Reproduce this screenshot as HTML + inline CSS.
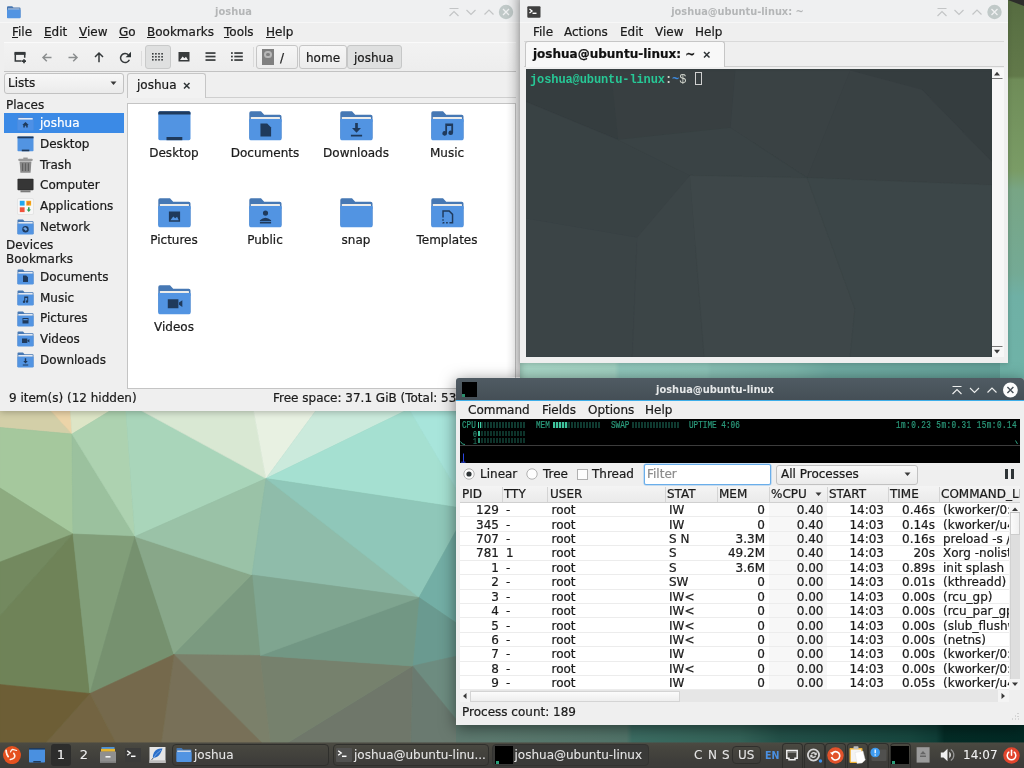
<!DOCTYPE html>
<html lang="en">
<head>
<meta charset="utf-8">
<title>Desktop</title>
<style>
*{box-sizing:border-box;margin:0;padding:0}
html,body{width:1024px;height:768px;overflow:hidden;background:#7fa590}
body{position:relative;font-family:"DejaVu Sans","Liberation Sans",sans-serif;font-size:12px;color:#1b1b1b;line-height:14px}
.abs{position:absolute}
.t{position:absolute;white-space:nowrap;line-height:14px;-webkit-text-stroke:0.22px currentColor}
#panel .t{-webkit-text-stroke:0.080px currentColor}
u{text-decoration:underline;text-underline-offset:1px}
#wall{position:absolute;left:0;top:0;width:1024px;height:768px}
.win{position:absolute;background:#efefef}
.tb{position:absolute;left:0;top:0;right:0}
.ttl{position:absolute;font-weight:bold;font-size:12px;white-space:nowrap;line-height:14px}
</style>
</head>
<body>
<div id="root" style="position:absolute;left:0;top:0;width:1024px;height:768px;will-change:transform">
<!-- WALLPAPER -->
<svg id="wall" viewBox="0 0 1024 768" shape-rendering="geometricPrecision">
<rect width="1024" height="768" fill="#7fa590"/>
<!--WALLPOLYS-->
<polygon fill="#d3cfa8" stroke="#d3cfa8" stroke-width="0.6" points="0,400 45.6,405 72,434 0,427.5"/>
<polygon fill="#ecd4a8" stroke="#ecd4a8" stroke-width="0.6" points="45.6,405 70,405 72,434"/>
<polygon fill="#dde5c6" stroke="#dde5c6" stroke-width="0.6" points="70,405 119.5,405 72,434"/>
<polygon fill="#a5c89d" stroke="#a5c89d" stroke-width="0.6" points="0,427.5 72,434 73,534 0,488"/>
<polygon fill="#9bc19e" stroke="#9bc19e" stroke-width="0.6" points="72,434 73,534 135,536.5"/>
<polygon fill="#add2b0" stroke="#add2b0" stroke-width="0.6" points="72,434 135,536.5 125.5,405 119.5,405"/>
<polygon fill="#a9d5ba" stroke="#a9d5ba" stroke-width="0.6" points="135,536.5 266,478.5 131,405 125.5,405"/>
<polygon fill="#d9e8d3" stroke="#d9e8d3" stroke-width="0.6" points="266,478.5 131,405 252.7,405"/>
<polygon fill="#e8f1e2" stroke="#e8f1e2" stroke-width="0.6" points="266,478.5 252.7,405 320,405"/>
<polygon fill="#cbeadc" stroke="#cbeadc" stroke-width="0.6" points="266,478.5 320,405 409,405 409,409"/>
<polygon fill="#a5e0d1" stroke="#a5e0d1" stroke-width="0.6" points="266,478.5 409,409 468,509"/>
<polygon fill="#a8e5db" stroke="#a8e5db" stroke-width="0.6" points="409,409 409,405 530,405 530,509 468,509"/>
<polygon fill="#8dab80" stroke="#8dab80" stroke-width="0.6" points="0,488 73,534 0,562"/>
<polygon fill="#73895f" stroke="#73895f" stroke-width="0.6" points="0,562 73,534 0,616"/>
<polygon fill="#6f8358" stroke="#6f8358" stroke-width="0.6" points="73,534 0,616 0,684.5 90,693.5"/>
<polygon fill="#819e79" stroke="#819e79" stroke-width="0.6" points="73,534 90,693.5 135,536.5"/>
<polygon fill="#76916f" stroke="#76916f" stroke-width="0.6" points="135,536.5 90,693.5 174,654.5"/>
<polygon fill="#88a789" stroke="#88a789" stroke-width="0.6" points="135,536.5 174,654.5 252,575"/>
<polygon fill="#9ac2a7" stroke="#9ac2a7" stroke-width="0.6" points="135,536.5 266,478.5 252,575"/>
<polygon fill="#8fbcaa" stroke="#8fbcaa" stroke-width="0.6" points="266,478.5 252,575 419,597.5"/>
<polygon fill="#8fc7b9" stroke="#8fc7b9" stroke-width="0.6" points="266,478.5 468,509 419,597.5"/>
<polygon fill="#73aea5" stroke="#73aea5" stroke-width="0.6" points="419,597.5 468,509 530,509 530,660 493,648"/>
<polygon fill="#6a9a90" stroke="#6a9a90" stroke-width="0.6" points="419,597.5 412.5,666 493,648"/>
<polygon fill="#6d8c80" stroke="#6d8c80" stroke-width="0.6" points="412.5,666 493,648 530,660 530,768 496,768"/>
<polygon fill="#6a7a70" stroke="#6a7a70" stroke-width="0.6" points="412.5,666 496,768 410,768"/>
<polygon fill="#6f776a" stroke="#6f776a" stroke-width="0.6" points="412.5,666 410,768 283.9,745"/>
<polygon fill="#76816d" stroke="#76816d" stroke-width="0.6" points="260,655.5 412.5,666 283.9,745 270.6,745"/>
<polygon fill="#729784" stroke="#729784" stroke-width="0.6" points="260,655.5 419,597.5 412.5,666"/>
<polygon fill="#7fa590" stroke="#7fa590" stroke-width="0.6" points="252,575 260,655.5 419,597.5"/>
<polygon fill="#7b9a80" stroke="#7b9a80" stroke-width="0.6" points="252,575 174,654.5 260,655.5"/>
<polygon fill="#7b806a" stroke="#7b806a" stroke-width="0.6" points="174,654.5 260,655.5 270.6,745 264,745"/>
<polygon fill="#787058" stroke="#787058" stroke-width="0.6" points="174,654.5 264,745 161,745"/>
<polygon fill="#75694c" stroke="#75694c" stroke-width="0.6" points="90,693.5 174,654.5 161,745 117,745"/>
<polygon fill="#736442" stroke="#736442" stroke-width="0.6" points="90,693.5 117,745 44,745"/>
<polygon fill="#6d5e36" stroke="#6d5e36" stroke-width="0.6" points="0,684.5 90,693.5 44,745 0,745"/>
<defs>
<linearGradient id="gR" x1="0" y1="0" x2="0" y2="1"><stop offset="0" stop-color="#566b40"/><stop offset="0.07" stop-color="#5a7144"/><stop offset="0.2" stop-color="#62794a"/><stop offset="0.21" stop-color="#6f8c58"/><stop offset="0.45" stop-color="#7a9c66"/><stop offset="0.5" stop-color="#78a585"/><stop offset="0.72" stop-color="#74aa95"/><stop offset="0.78" stop-color="#6fb0a5"/><stop offset="1" stop-color="#6fb3a8"/></linearGradient>
<linearGradient id="gC" x1="0" y1="0" x2="1" y2="0"><stop offset="0" stop-color="#a8d6c6"/><stop offset="0.2" stop-color="#a0d0c0"/><stop offset="0.21" stop-color="#8fc6ba"/><stop offset="0.38" stop-color="#8cc3b7"/><stop offset="0.39" stop-color="#86bdb2"/><stop offset="0.55" stop-color="#7bb5aa"/><stop offset="0.62" stop-color="#6eaaa1"/><stop offset="1" stop-color="#62a098"/></linearGradient>
<linearGradient id="gE" x1="0" y1="0" x2="1" y2="0"><stop offset="0" stop-color="#5f7a70"/><stop offset="0.06" stop-color="#5d7b70"/><stop offset="0.3" stop-color="#52756a"/><stop offset="0.31" stop-color="#3d6e64"/><stop offset="0.5" stop-color="#346459"/><stop offset="0.57" stop-color="#24524a"/><stop offset="0.8" stop-color="#174840"/><stop offset="0.845" stop-color="#104039"/><stop offset="0.86" stop-color="#042d27"/><stop offset="1" stop-color="#022a25"/></linearGradient>
</defs>
<rect x="512" y="0" width="512" height="380" fill="url(#gC)"/>
<rect x="1000" y="0" width="24" height="380" fill="url(#gR)"/>
<polygon points="1008,0 1024,0 1024,6" fill="#2d2d2a"/>
<rect x="456" y="700" width="568" height="50" fill="url(#gE)"/>
<!--/WALLPOLYS-->
</svg>

<!--FM-->
<div class="win" id="fm" style="left:0;top:0;width:520px;height:411px;box-shadow:0 1px 7px rgba(0,0,0,.28)">
 <div class="abs" style="left:0;top:0;width:520px;height:22px;background:#eff0f1"></div>
 <svg class="abs" style="left:7px;top:5px" width="14" height="14" viewBox="0 0 14 14"><path d="M0,2.2 a1,1 0 0 1 1,-1 h4.2 l1.3,1.4 h6 a1,1 0 0 1 1,1 v9 h-13.5z" fill="#4877b1"/><rect x="1" y="3.6" width="11.5" height="1" fill="#e8eef5"/><rect x="0" y="4.6" width="13.5" height="8.6" rx="0.8" fill="#5294e2"/></svg>
 <div class="ttl" style="left:23px;width:421px;text-align:center;top:5px;font-size:9.900px;color:#b4b6b7">joshua</div>
 <svg class="abs" style="left:446px;top:4px" width="70" height="16" viewBox="0 0 70 16" fill="none" stroke="#c3c5c6" stroke-width="1.2">
  <path d="M3.5,4.5h9M3.5,12l4.5,-4.5l4.5,4.5"/><path d="M20.5,6l4.5,4.5l4.5,-4.5"/><path d="M38.500,10.500l4.500,-4.500l4.500,4.500"/>
  <circle cx="60" cy="8" r="7.200" fill="#c0c9c8" stroke="none"/><path d="M57,5l6,6M63,5l-6,6" stroke="#eff0f1" stroke-width="1.300"/>
 </svg>
 <div class="abs" style="left:0;top:22px;width:520px;height:1px;background:#f7f7f7"></div>
 <!-- menubar -->
 <div class="t" style="left:12px;top:25px"><u>F</u>ile</div>
 <div class="t" style="left:44px;top:25px"><u>E</u>dit</div>
 <div class="t" style="left:79px;top:25px"><u>V</u>iew</div>
 <div class="t" style="left:119px;top:25px"><u>G</u>o</div>
 <div class="t" style="left:147px;top:25px"><u>B</u>ookmarks</div>
 <div class="t" style="left:224px;top:25px"><u>T</u>ools</div>
 <div class="t" style="left:266px;top:25px"><u>H</u>elp</div>
 <!-- toolbar -->
 <div class="abs" style="left:4px;top:42px;width:512px;height:1px;background:#fafafa"></div>
 <div class="abs" style="left:4px;top:43px;width:512px;height:28px;background:linear-gradient(#f2f2f2,#ededed)"></div>
 <div class="abs" style="left:4px;top:71px;width:512px;height:1px;background:#c2c2c2"></div>
 <svg class="abs" style="left:12px;top:48.500px" width="240" height="18" viewBox="0 0 240 18" fill="none" stroke="#34383a" stroke-width="1.500">
  <!-- new tab -->
  <path d="M3.300,3.500v8.600h6.400M12.700,3.500v5.300"/><path d="M2.550,4.400h10.900" stroke-width="3"/><path d="M12,10.200v4M10,12.200h4" stroke-width="1.700"/>
  <!-- back / fwd (disabled) -->
  <g stroke="#8b8e8f"><path d="M31,8.500h8.500M34.800,4.700l-3.800,3.800l3.800,3.800"/><path d="M56.500,8.500h8.500M61.200,4.700l3.800,3.800l-3.800,3.800"/></g>
  <!-- up -->
  <path d="M87,13.200v-9M83,8l4,-4l4,4"/>
  <!-- reload -->
  <path d="M116.400,5.700A4.600,4.600 0 1 0 117.400,10.800"/><path d="M119,2.800v5.400h-5.400z" fill="#2e3436" stroke="none"/>
  <!-- sep -->
  <path d="M129.500,2v15" stroke="#dcdcdc" stroke-width="1"/>
 </svg>
 <div class="abs" style="left:145px;top:45px;width:26px;height:24px;background:#dfe0e0;border:1px solid #c9caca;border-radius:3px"></div>
 <svg class="abs" style="left:145px;top:45px" width="110" height="24" viewBox="0 0 110 24" fill="#383b3c">
  <g><rect x="7.0" y="8.0" width="1.600" height="1.600"/><rect x="10.1" y="8.0" width="1.600" height="1.600"/><rect x="13.2" y="8.0" width="1.600" height="1.600"/><rect x="16.3" y="8.0" width="1.600" height="1.600"/><rect x="7.0" y="11.0" width="1.600" height="1.600"/><rect x="10.1" y="11.0" width="1.600" height="1.600"/><rect x="13.2" y="11.0" width="1.600" height="1.600"/><rect x="16.3" y="11.0" width="1.600" height="1.600"/><rect x="7.0" y="14.0" width="1.600" height="1.600"/><rect x="10.1" y="14.0" width="1.600" height="1.600"/><rect x="13.2" y="14.0" width="1.600" height="1.600"/><rect x="16.3" y="14.0" width="1.600" height="1.600"/></g>
  <path d="M33.500,7h11v9.500h-11z M35,15l2.600,-3.600l1.800,1.800l1.600,-1.400l2,3.200z" fill-rule="evenodd"/>
  <rect x="60.500" y="7.200" width="10" height="1.700"/><rect x="60.500" y="10.700" width="10" height="1.700"/><rect x="60.500" y="14.200" width="10" height="1.700"/>
  <rect x="86" y="7.200" width="1.800" height="1.700"/><rect x="89.300" y="7.200" width="8.500" height="1.700"/><rect x="86" y="10.700" width="1.800" height="1.700"/><rect x="89.300" y="10.700" width="8.500" height="1.700"/><rect x="86" y="14.200" width="1.800" height="1.700"/><rect x="89.300" y="14.200" width="8.500" height="1.700"/>
  <rect x="108" y="2" width="1" height="20" fill="#dcdcdc"/>
 </svg>
 <!-- path bar -->
 <div class="abs" style="left:256px;top:45px;width:42px;height:24px;background:linear-gradient(#f6f6f6,#ececec);border:1px solid #c6c6c6;border-radius:3px"></div>
 <div class="abs" style="left:262px;top:49px;width:12px;height:16px;background:#808080"></div>
 <div class="abs" style="left:264px;top:51px;width:8px;height:7px;border:2px solid #b8b8b8;border-radius:4px"></div>
 <div class="t" style="left:280px;top:51px">/</div>
 <div class="abs" style="left:299px;top:45px;width:48px;height:24px;background:linear-gradient(#f6f6f6,#ececec);border:1px solid #c6c6c6;border-radius:3px"></div>
 <div class="t" style="left:306px;top:51px">home</div>
 <div class="abs" style="left:347px;top:45px;width:55px;height:24px;background:#dfe0e0;border:1px solid #c6c7c7;border-radius:3px"></div>
 <div class="t" style="left:354px;top:51px">joshua</div>
 <!-- side pane -->
 <div class="abs" style="left:4px;top:73px;width:120px;height:21px;background:linear-gradient(#f7f7f7,#ebebeb);border:1px solid #c2c2c2;border-radius:3px"></div>
 <div class="t" style="left:8px;top:76px">Lists</div>
 <svg class="abs" style="left:110px;top:81px" width="8" height="5"><path d="M0.500,0.500h6l-3,3.500z" fill="#3a3a3a"/></svg>
 <div class="t" style="left:6px;top:98px">Places</div>
 <div class="abs" style="left:4px;top:113px;width:120px;height:20px;background:#3b8ae6"></div>
 <div class="t" style="left:40px;top:116px;color:#fff">joshua</div>
 <div class="t" style="left:40px;top:137px">Desktop</div>
 <div class="t" style="left:40px;top:158px">Trash</div>
 <div class="t" style="left:40px;top:178px">Computer</div>
 <div class="t" style="left:40px;top:199px">Applications</div>
 <div class="t" style="left:40px;top:220px">Network</div>
 <div class="t" style="left:6px;top:238px">Devices</div>
 <div class="t" style="left:6px;top:252px">Bookmarks</div>
 <div class="t" style="left:40px;top:270px">Documents</div>
 <div class="t" style="left:40px;top:291px">Music</div>
 <div class="t" style="left:40px;top:311px">Pictures</div>
 <div class="t" style="left:40px;top:332px">Videos</div>
 <div class="t" style="left:40px;top:353px">Downloads</div>
 <!--SIDEICONS-->
<svg class="abs" style="left:17px;top:115px" width="17" height="16" viewBox="0 0 17 16"><path d="M0.500,1.300a0.800,0.800 0 0 1 0.800,-0.800h4.700l1.500,1.700h8.200a0.800,0.800 0 0 1 0.800,0.800v12h-16z" fill="#4a86d6"/><rect x="1.300" y="3.100" width="14.400" height="1.600" fill="#f4f6fa"/><rect x="0.500" y="4.700" width="16" height="10.800" rx="0.800" fill="#4d90e6"/><path d="M8.500,7l3.200,3h-1v2.600h-1.500v-1.800h-1.400v1.800h-1.500v-2.600h-1z" fill="#1f3a5c"/></svg>
<svg class="abs" style="left:17px;top:136px" width="17" height="16" viewBox="0 0 17 16"><rect x="0.500" y="0.500" width="16" height="14.800" rx="0.800" fill="#5294e2"/><rect x="0.500" y="0.500" width="16" height="1.800" fill="#1f3a5c"/><rect x="4.800" y="13.600" width="7.500" height="1.700" fill="#1f3a5c"/></svg>
<svg class="abs" style="left:17px;top:157px" width="17" height="17" viewBox="0 0 17 17"><path d="M6.300,0.600h4.400v1.300h-4.400z" fill="#8a8a8a"/><rect x="1.500" y="1.700" width="14" height="2.300" rx="0.600" fill="#9a9a9a"/><path d="M2.600,4.400h11.800l-0.800,11.400h-10.200z" fill="#8b8b8b"/><path d="M5.600,6.200v7.800M8.500,6.200v7.800M11.400,6.200v7.800" stroke="#5f5f5f" stroke-width="1.300"/></svg>
<svg class="abs" style="left:17px;top:178px" width="17" height="16" viewBox="0 0 17 16"><rect x="0.500" y="0.800" width="16" height="11.500" rx="0.800" fill="#2f2f2f"/><rect x="1.500" y="1.800" width="14" height="9.500" fill="#363636"/><rect x="3.500" y="12.300" width="10" height="2" fill="#7a7a7a"/></svg>
<svg class="abs" style="left:17px;top:198px" width="17" height="17" viewBox="0 0 17 17"><rect x="0.500" y="0.500" width="16" height="16" rx="1.500" fill="#f7f7f7" stroke="#dcdcdc" stroke-width="0.600"/><rect x="2.800" y="2.800" width="4.800" height="4.800" fill="#22a7f0"/><rect x="9.300" y="2.800" width="4.800" height="4.800" fill="#f5b016"/><path d="M10,4.200h3.400M10,5.300h3.400M10,6.400h2" stroke="#e85a3a" stroke-width="0.700"/><rect x="2.800" y="9.300" width="4.800" height="4.800" fill="#f0533c"/><path d="M11,9.300h1.600v2.300h1.400l-2.200,2.400l-2.200,-2.400h1.400z" fill="#2e9e57"/></svg>
<svg class="abs" style="left:17px;top:219px" width="17" height="16" viewBox="0 0 17 16"><path d="M0.500,1.300a0.800,0.800 0 0 1 0.800,-0.800h4.700l1.500,1.700h8.200a0.800,0.800 0 0 1 0.800,0.800v12h-16z" fill="#4678b4"/><rect x="1.300" y="3.100" width="14.400" height="1.600" fill="#f4f6fa"/><rect x="0.500" y="4.700" width="16" height="10.800" rx="0.800" fill="#5294e2"/><circle cx="8.500" cy="10.300" r="3.200" fill="#1f3a5c"/><path d="M6.500,9q2,-1.500 3,0.300q1.500,0.800 0.200,2q-1.500,1.200 -1.800,-0.500q-1.800,-0.300 -1.400,-1.800z" fill="#6fa4e3"/></svg>
<svg class="abs" style="left:17px;top:269px" width="17" height="16" viewBox="0 0 17 16"><path d="M0.500,1.300a0.800,0.800 0 0 1 0.800,-0.800h4.700l1.500,1.700h8.200a0.800,0.800 0 0 1 0.800,0.800v12h-16z" fill="#4678b4"/><rect x="1.300" y="3.100" width="14.400" height="1.600" fill="#f4f6fa"/><rect x="0.500" y="4.700" width="16" height="10.800" rx="0.800" fill="#5294e2"/><path d="M6,6.500h3.200l1.800,1.800v4.700h-5z" fill="#1f3a5c"/></svg>
<svg class="abs" style="left:17px;top:290px" width="17" height="16" viewBox="0 0 17 16"><path d="M0.500,1.300a0.800,0.800 0 0 1 0.800,-0.800h4.700l1.500,1.700h8.200a0.800,0.800 0 0 1 0.800,0.800v12h-16z" fill="#4678b4"/><rect x="1.300" y="3.100" width="14.400" height="1.600" fill="#f4f6fa"/><rect x="0.500" y="4.700" width="16" height="10.800" rx="0.800" fill="#5294e2"/><path d="M7.200,6.500h4v5a1.200,1.200 0 1 1 -1,-1.100v-2.500h-2v3.800a1.200,1.200 0 1 1 -1,-1.100z" fill="#1f3a5c"/></svg>
<svg class="abs" style="left:17px;top:311px" width="17" height="16" viewBox="0 0 17 16"><path d="M0.500,1.300a0.800,0.800 0 0 1 0.800,-0.800h4.700l1.500,1.700h8.200a0.800,0.800 0 0 1 0.800,0.800v12h-16z" fill="#4678b4"/><rect x="1.300" y="3.100" width="14.400" height="1.600" fill="#f4f6fa"/><rect x="0.500" y="4.700" width="16" height="10.800" rx="0.800" fill="#5294e2"/><path d="M5.500,7h6v5.500h-6z M6.300,9.300h4.400v-1.300h-4.400z" fill="#1f3a5c" fill-rule="evenodd"/></svg>
<svg class="abs" style="left:17px;top:331px" width="17" height="16" viewBox="0 0 17 16"><path d="M0.500,1.300a0.800,0.800 0 0 1 0.800,-0.800h4.700l1.500,1.700h8.200a0.800,0.800 0 0 1 0.800,0.800v12h-16z" fill="#4678b4"/><rect x="1.300" y="3.100" width="14.400" height="1.600" fill="#f4f6fa"/><rect x="0.500" y="4.700" width="16" height="10.800" rx="0.800" fill="#5294e2"/><path d="M5,7.500h5.300v4.500h-5.300z M10.600,9.300l1.800,-1.200v3.300l-1.800,-1.200z" fill="#1f3a5c"/></svg>
<svg class="abs" style="left:17px;top:352px" width="17" height="16" viewBox="0 0 17 16"><path d="M0.500,1.300a0.800,0.800 0 0 1 0.800,-0.800h4.700l1.500,1.700h8.200a0.800,0.800 0 0 1 0.800,0.800v12h-16z" fill="#4678b4"/><rect x="1.300" y="3.100" width="14.400" height="1.600" fill="#f4f6fa"/><rect x="0.500" y="4.700" width="16" height="10.800" rx="0.800" fill="#5294e2"/><path d="M7.800,6.300h1.400v2.700h1.600l-2.300,2.500l-2.300,-2.500h1.600z M5.800,12.500h5.400v1h-5.400z" fill="#1f3a5c"/></svg>
<!--/SIDEICONS-->
 <!-- tab -->
 <div class="abs" style="left:127px;top:97px;width:389px;height:1px;background:#cfcfcf"></div>
 <div class="abs" style="left:127px;top:73px;width:79px;height:25px;background:#f2f2f2;border:1px solid #c6c6c6;border-bottom:none;border-radius:3px 3px 0 0"></div>
 <div class="t" style="left:137px;top:78px">joshua</div>
 <svg class="abs" style="left:183px;top:82px" width="8" height="8"><path d="M1,1l5.500,5.500M6.500,1l-5.500,5.500" stroke="#2e3436" stroke-width="1.500"/></svg>
 <!-- view -->
 <div class="abs" style="left:127px;top:103px;width:389px;height:286px;background:#fff;border:1px solid #c4c4c4"></div>
 <!--VIEWICONS-->
<svg class="abs" style="left:158px;top:111px" width="33" height="30" viewBox="0 0 33 30"><rect x="0.300" y="0.200" width="32.200" height="29" rx="1.600" fill="#5294e2"/><path d="M0.300,3.400v-1.600a1.600,1.600 0 0 1 1.600,-1.600h29a1.600,1.600 0 0 1 1.600,1.600v1.600z" fill="#1f3a5c"/><rect x="8.500" y="26" width="15.800" height="3.200" fill="#1f3a5c"/></svg>
<div class="t" style="left:123.5px;top:146px;width:101px;text-align:center">Desktop</div>
<svg class="abs" style="left:249px;top:111px" width="33" height="30" viewBox="0 0 33 30"><path d="M0.300,2a1.700,1.700 0 0 1 1.700,-1.700h10l3.200,3.400h15.600a1.700,1.700 0 0 1 1.700,1.700v22h-32.200z" fill="#4678b4"/><rect x="1.800" y="6" width="29.200" height="2.100" rx="0.500" fill="#ececea"/><rect x="0.300" y="8" width="32.200" height="21.300" rx="1.600" fill="#5294e2"/><rect x="0.300" y="8" width="32.200" height="3" fill="#5294e2"/><g transform="translate(16.500 19) scale(1.120) translate(-16.500 -18.300)"><path d="M12,12.500h6l3.500,3.500v8h-9.500z" fill="#1f3a5c"/></g></svg>
<div class="t" style="left:214.5px;top:146px;width:101px;text-align:center">Documents</div>
<svg class="abs" style="left:340px;top:111px" width="33" height="30" viewBox="0 0 33 30"><path d="M0.300,2a1.700,1.700 0 0 1 1.700,-1.700h10l3.200,3.400h15.600a1.700,1.700 0 0 1 1.700,1.700v22h-32.200z" fill="#4678b4"/><rect x="1.800" y="6" width="29.200" height="2.100" rx="0.500" fill="#ececea"/><rect x="0.300" y="8" width="32.200" height="21.300" rx="1.600" fill="#5294e2"/><rect x="0.300" y="8" width="32.200" height="3" fill="#5294e2"/><g transform="translate(16.500 19) scale(1.120) translate(-16.500 -18.300)"><path d="M15.300,12h2.400v4.500h2.800l-4,4.300l-4,-4.300h2.800z M11.500,22.500h10v1.600h-10z" fill="#1f3a5c"/></g></svg>
<div class="t" style="left:305.5px;top:146px;width:101px;text-align:center">Downloads</div>
<svg class="abs" style="left:431px;top:111px" width="33" height="30" viewBox="0 0 33 30"><path d="M0.300,2a1.700,1.700 0 0 1 1.700,-1.700h10l3.200,3.400h15.600a1.700,1.700 0 0 1 1.700,1.700v22h-32.200z" fill="#4678b4"/><rect x="1.800" y="6" width="29.200" height="2.100" rx="0.500" fill="#ececea"/><rect x="0.300" y="8" width="32.200" height="21.300" rx="1.600" fill="#5294e2"/><rect x="0.300" y="8" width="32.200" height="3" fill="#5294e2"/><g transform="translate(16.500 19) scale(1.120) translate(-16.500 -18.300)"><path d="M14.500,12.500h7v8.300a2.100,2 0 1 1 -1.600,-1.900v-4.200h-3.800v6.600a2.100,2 0 1 1 -1.600,-1.900z" fill="#1f3a5c"/></g></svg>
<div class="t" style="left:396.5px;top:146px;width:101px;text-align:center">Music</div>
<svg class="abs" style="left:158px;top:198px" width="33" height="30" viewBox="0 0 33 30"><path d="M0.300,2a1.700,1.700 0 0 1 1.700,-1.700h10l3.200,3.400h15.600a1.700,1.700 0 0 1 1.700,1.700v22h-32.200z" fill="#4678b4"/><rect x="1.800" y="6" width="29.200" height="2.100" rx="0.500" fill="#ececea"/><rect x="0.300" y="8" width="32.200" height="21.300" rx="1.600" fill="#5294e2"/><rect x="0.300" y="8" width="32.200" height="3" fill="#5294e2"/><g transform="translate(16.500 19) scale(1.120) translate(-16.500 -18.300)"><path d="M11.500,13.500h10v9h-10z M12.800,21.200l2.600,-3.400l1.700,1.600l1.700,-1.400l1.500,3.200z" fill="#1f3a5c" fill-rule="evenodd"/></g></svg>
<div class="t" style="left:123.5px;top:233px;width:101px;text-align:center">Pictures</div>
<svg class="abs" style="left:249px;top:198px" width="33" height="30" viewBox="0 0 33 30"><path d="M0.300,2a1.700,1.700 0 0 1 1.700,-1.700h10l3.200,3.400h15.600a1.700,1.700 0 0 1 1.700,1.700v22h-32.200z" fill="#4678b4"/><rect x="1.800" y="6" width="29.200" height="2.100" rx="0.500" fill="#ececea"/><rect x="0.300" y="8" width="32.200" height="21.300" rx="1.600" fill="#5294e2"/><rect x="0.300" y="8" width="32.200" height="3" fill="#5294e2"/><g transform="translate(16.500 19) scale(1.120) translate(-16.500 -18.300)"><circle cx="16.500" cy="14.800" r="2.300" fill="#1f3a5c"/><path d="M11.500,21.300q5,-4.500 10,0v0.700h-10z M11.500,22.800h10v1.300h-10z" fill="#1f3a5c"/></g></svg>
<div class="t" style="left:214.5px;top:233px;width:101px;text-align:center">Public</div>
<svg class="abs" style="left:340px;top:198px" width="33" height="30" viewBox="0 0 33 30"><path d="M0.300,2a1.700,1.700 0 0 1 1.700,-1.700h10l3.200,3.400h15.600a1.700,1.700 0 0 1 1.700,1.700v22h-32.200z" fill="#4678b4"/><rect x="1.800" y="6" width="29.200" height="2.100" rx="0.500" fill="#ececea"/><rect x="0.300" y="8" width="32.200" height="21.300" rx="1.600" fill="#5294e2"/><rect x="0.300" y="8" width="32.200" height="3" fill="#5294e2"/><g transform="translate(16.500 19) scale(1.120) translate(-16.500 -18.300)"></g></svg>
<div class="t" style="left:305.5px;top:233px;width:101px;text-align:center">snap</div>
<svg class="abs" style="left:431px;top:198px" width="33" height="30" viewBox="0 0 33 30"><path d="M0.300,2a1.700,1.700 0 0 1 1.700,-1.700h10l3.200,3.400h15.600a1.700,1.700 0 0 1 1.700,1.700v22h-32.200z" fill="#4678b4"/><rect x="1.800" y="6" width="29.200" height="2.100" rx="0.500" fill="#ececea"/><rect x="0.300" y="8" width="32.200" height="21.300" rx="1.600" fill="#5294e2"/><rect x="0.300" y="8" width="32.200" height="3" fill="#5294e2"/><g transform="translate(16.500 19) scale(1.120) translate(-16.500 -18.300)"><path d="M12.500,13h5.500l3,3v7.500h-8.500z" fill="none" stroke="#1f3a5c" stroke-width="1.300" stroke-dasharray="20 1.500 1.500 1.500 1.500 1.500 1.500 1.500 30"/></g></svg>
<div class="t" style="left:396.5px;top:233px;width:101px;text-align:center">Templates</div>
<svg class="abs" style="left:158px;top:285px" width="33" height="30" viewBox="0 0 33 30"><path d="M0.300,2a1.700,1.700 0 0 1 1.700,-1.700h10l3.200,3.400h15.600a1.700,1.700 0 0 1 1.700,1.700v22h-32.200z" fill="#4678b4"/><rect x="1.800" y="6" width="29.200" height="2.100" rx="0.500" fill="#ececea"/><rect x="0.300" y="8" width="32.200" height="21.300" rx="1.600" fill="#5294e2"/><rect x="0.300" y="8" width="32.200" height="3" fill="#5294e2"/><g transform="translate(16.500 19) scale(1.120) translate(-16.500 -18.300)"><path d="M10.500,14h9.500v8h-9.500z M20.500,17l3,-2v6l-3,-2z" fill="#1f3a5c"/></g></svg>
<div class="t" style="left:123.5px;top:320px;width:101px;text-align:center">Videos</div>
<!--/VIEWICONS-->
 <!-- status -->
 <div class="t" style="left:9px;top:391px">9 item(s) (12 hidden)</div>
 <div class="t" style="left:273px;top:391px;width:243px;overflow:hidden">Free space: 37.1 GiB (Total: 53.4 GiB)</div>
 <!-- terminal shadow on right -->
 <div class="abs" style="left:506px;top:0;width:14px;height:377px;background:linear-gradient(90deg,rgba(0,0,0,0),rgba(0,0,0,.05) 40%,rgba(0,0,0,.2))"></div>
</div>

<!--/FM-->
<!--TERM-->
<div class="win" id="term" style="left:520px;top:0;width:488px;height:363px;box-shadow:0 1px 5px rgba(0,0,0,.18)">
 <div class="abs" style="left:0;top:0;width:488px;height:22px;background:#eff0f1"></div>
 <svg class="abs" style="left:7px;top:6px" width="14" height="12" viewBox="0 0 14 12"><rect x="0.300" y="0.300" width="13.200" height="11.400" rx="1" fill="#3f3f3f"/><path d="M2.500,3l2.500,2l-2.500,2" stroke="#fff" stroke-width="1.300" fill="none"/><path d="M5.500,7.300h4" stroke="#fff" stroke-width="1.400"/></svg>
 <div class="ttl" style="left:23px;width:389px;text-align:center;top:5px;font-size:9.800px;color:#b4b6b7">joshua@ubuntu-linux: ~</div>
 <svg class="abs" style="left:414px;top:4px" width="70" height="16" viewBox="0 0 70 16" fill="none" stroke="#c3c5c6" stroke-width="1.200">
  <path d="M3.500,4.500h9M3.500,12l4.500,-4.500l4.500,4.500"/><path d="M20.500,6l4.500,4.500l4.500,-4.500"/><path d="M38.500,10.500l4.500,-4.500l4.500,4.500"/>
  <circle cx="60.500" cy="8" r="7.200" fill="#c0c9c8" stroke="none"/><path d="M57.500,5l6,6M63.500,5l-6,6" stroke="#eff0f1" stroke-width="1.300"/>
 </svg>
 <div class="abs" style="left:0;top:22px;width:488px;height:1px;background:#f7f7f7"></div>
 <div class="t" style="left:13px;top:25px">File</div>
 <div class="t" style="left:44px;top:25px">Actions</div>
 <div class="t" style="left:100px;top:25px">Edit</div>
 <div class="t" style="left:135px;top:25px">View</div>
 <div class="t" style="left:175px;top:25px">Help</div>
 <div class="abs" style="left:4px;top:41px;width:480px;height:1px;background:#d9d9d9"></div>
 <div class="abs" style="left:4px;top:66px;width:480px;height:1px;background:#d0d0d0"></div>
 <div class="abs" style="left:5px;top:41px;width:200px;height:26px;background:#f8f8f8;border:1px solid #c6c6c6;border-bottom:none;border-radius:3px 3px 0 0"></div>
 <div class="t" style="left:13px;top:47px;font-weight:bold;color:#111">joshua@ubuntu-linux: ~</div>
 <svg class="abs" style="left:183px;top:51px" width="8" height="8"><path d="M1,1l5.500,5.500M6.500,1l-5.500,5.500" stroke="#2e3436" stroke-width="1.500"/></svg>
 <!-- terminal body -->
 <svg class="abs" style="left:6px;top:69px" width="466" height="288" viewBox="0 0 466 289" preserveAspectRatio="none"><rect width="466" height="289" fill="#373f41"/><polygon fill="#353d3f" stroke="#353d3f" stroke-width="0.3" points="-0.3,1.6 84.9,1.6 92.1,70.9 -0.3,32.7"/><polygon fill="#383f41" stroke="#383f41" stroke-width="0.3" points="84.9,1.6 209.3,1.6 204.5,59.0 92.1,70.9"/><polygon fill="#3a4244" stroke="#3a4244" stroke-width="0.3" points="209.3,1.6 324.1,1.6 281.1,109.2 204.5,59.0"/><polygon fill="#353d3f" stroke="#353d3f" stroke-width="0.3" points="324.1,1.6 465.3,1.6 465.3,92.5 395.9,20.7"/><polygon fill="#394143" stroke="#394143" stroke-width="0.3" points="324.1,1.6 395.9,20.7 465.3,92.5 465.3,116.4 281.1,109.2"/><polygon fill="#394244" stroke="#394244" stroke-width="0.3" points="-0.3,32.7 92.1,70.9 163.9,106.8 111.2,169.0 -0.3,149.9"/><polygon fill="#3a4345" stroke="#3a4345" stroke-width="0.3" points="92.1,70.9 204.5,59.0 281.1,109.2 163.9,106.8"/><polygon fill="#3b4446" stroke="#3b4446" stroke-width="0.3" points="-0.3,149.9 111.2,169.0 106.4,288.7 -0.3,288.7"/><polygon fill="#3c4547" stroke="#3c4547" stroke-width="0.3" points="111.2,169.0 163.9,106.8 178.2,288.7 106.4,288.7"/><polygon fill="#3e4749" stroke="#3e4749" stroke-width="0.3" points="163.9,106.8 281.1,109.2 328.9,240.8 324.1,288.7 178.2,288.7"/><polygon fill="#3c4648" stroke="#3c4648" stroke-width="0.3" points="281.1,109.2 465.3,116.4 465.3,288.7 324.1,288.7 328.9,240.8"/></svg>
 <div class="t" style="left:10px;top:73px;font-family:'Liberation Mono','DejaVu Sans Mono',monospace;font-weight:bold;font-size:12px;letter-spacing:-0.100px;color:#d3d7cf;-webkit-text-stroke:0"><span style="color:#27c896">joshua@ubuntu-linux</span>:<span style="color:#3d8ae0">~</span><span style="font-weight:normal">$</span></div>
 <div class="abs" style="left:175px;top:72px;width:7px;height:13px;border:1px solid #d0d0d0"></div>
 <!-- scrollbar -->
 <div class="abs" style="left:472px;top:68px;width:12px;height:289px;background:#f7f7f7"></div>
 <svg class="abs" style="left:472px;top:68px" width="12" height="289" viewBox="0 0 12 289"><path d="M2,7.500l3,-3.700l3,3.700z M2,281.800l3,3.700l3,-3.700z" fill="#3a3a3a"/><path d="M0,10.500h10.500M0,278.500h10.500" stroke="#555" stroke-width="0.800"/></svg>
</div>

<!--/TERM-->
<!--QPS-->
<div class="win" id="qps" style="left:456px;top:378px;width:568px;height:347px;border-radius:3px 3px 0 0;box-shadow:0 3px 16px rgba(0,0,0,.5)">
<div class="abs" style="left:0;top:0;width:568px;height:23px;background:linear-gradient(#505b63,#454f56);border-bottom:1px solid #3daee9;border-radius:3px 3px 0 0"></div>
<div class="abs" style="left:6px;top:4px;width:15px;height:15px;background:#000"></div><div class="abs" style="left:6px;top:16px;width:3px;height:3px;background:#2a8c6a"></div>
<div class="ttl" style="left:26px;width:466px;text-align:center;top:5px;color:#e6e8e9;font-size:9.900px">joshua@ubuntu-linux</div>
<svg class="abs" style="left:493px;top:4px" width="75" height="16" viewBox="0 0 75 16" fill="none" stroke="#eceded" stroke-width="1.150"><path d="M3.500,4.500h9M3.500,12l4.500,-4.500l4.500,4.500"/><path d="M21,6l4.500,4.500l4.500,-4.500"/><path d="M38.500,10.500l4.500,-4.500l4.500,4.500"/><circle cx="61.400" cy="8" r="7.400" fill="#fcfcfc" stroke="none"/><path d="M58.400,5l6,6M64.400,5l-6,6" stroke="#454f56" stroke-width="1.400"/></svg>
<div class="t" style="left:12px;top:25px">Command</div>
<div class="t" style="left:86px;top:25px">Fields</div>
<div class="t" style="left:132px;top:25px">Options</div>
<div class="t" style="left:189px;top:25px">Help</div>
<div class="abs" style="left:4px;top:41px;width:560px;height:44px;background:#000"></div>
<div class="abs" style="left:4px;top:67px;width:560px;height:1px;background:#3c3c3c"></div>
<!--QPSBAR-->
<div class="abs" id="qbar" style="left:4px;top:41px;width:560px;height:44px;overflow:hidden;font-family:'Liberation Mono','DejaVu Sans Mono',monospace;font-weight:normal;font-size:10px;line-height:8px;color:#2b9a7b;letter-spacing:0">
 <div class="t" style="transform:scaleX(0.770);transform-origin:0 0;left:2px;top:3px;line-height:8px">CPU</div>
 <div class="abs" style="left:18px;top:2.500px;width:47px;height:6.500px;background:repeating-linear-gradient(90deg,#0f3a30 0 2px,#000 2px 3px)"></div>
 <div class="abs" style="left:18px;top:2.500px;width:3px;height:6.500px;background:repeating-linear-gradient(90deg,#43cfa6 0 1px,#000 1px 1.500px)"></div>
 <div class="t" style="transform:scaleX(0.770);transform-origin:0 0;left:76px;top:3px;line-height:8px">MEM</div>
 <div class="abs" style="left:93px;top:2.500px;width:47px;height:6.500px;background:repeating-linear-gradient(90deg,#0f3a30 0 2px,#000 2px 3px)"></div>
 <div class="abs" style="left:93px;top:2.500px;width:15px;height:6.500px;background:repeating-linear-gradient(90deg,#3fc49d 0 2px,#0c2a23 2px 3px)"></div>
 <div class="t" style="transform:scaleX(0.770);transform-origin:0 0;left:151px;top:3px;line-height:8px">SWAP</div>
 <div class="abs" style="left:172px;top:2.500px;width:47px;height:6.500px;background:repeating-linear-gradient(90deg,#0f3a30 0 2px,#000 2px 3px)"></div>
 <div class="t" style="transform:scaleX(0.770);transform-origin:0 0;left:229px;top:3px;line-height:8px">UPTIME 4:06</div>
 <div class="t" style="transform:scaleX(0.770);transform-origin:0 0;left:436px;top:3px;line-height:8px;letter-spacing:0.550px">1m:0.23 5m:0.31 15m:0.14</div>
 <div class="t" style="transform:scaleX(0.770);transform-origin:0 0;left:12.500px;top:11.500px;line-height:8px;font-size:8.500px;color:#2a8a70">0</div>
 <div class="abs" style="left:18px;top:11.500px;width:47px;height:5.500px;background:repeating-linear-gradient(90deg,#0d332a 0 2px,#000 2px 3px)"></div>
 <div class="abs" style="left:18px;top:11.500px;width:1.500px;height:5.500px;background:#3fc49d"></div>
 <div class="t" style="transform:scaleX(0.770);transform-origin:0 0;left:12.500px;top:18.500px;line-height:8px;font-size:8.500px;color:#1f6a56">1</div>
 <div class="abs" style="left:18px;top:18.500px;width:47px;height:5.500px;background:repeating-linear-gradient(90deg,#0d332a 0 2px,#000 2px 3px)"></div>
 <div class="abs" style="left:18px;top:18.500px;width:1.500px;height:5.500px;background:#2a8a70"></div>
 <svg class="abs" style="left:0;top:20px" width="560" height="25"><path d="M0.500,2.500l2,2.500l2.500,0.500" stroke="#2f9f80" stroke-width="1" fill="none"/><path d="M555.500,1.500l2,3.500" stroke="#2f9f80" stroke-width="1" fill="none"/><path d="M3.500,14.500v8.500" stroke="#2b45e0" stroke-width="1"/><path d="M1,23.200h4.500" stroke="#2b45e0" stroke-width="1"/></svg>
</div>

<!--/QPSBAR-->
<svg class="abs" style="left:7px;top:90px" width="12" height="12"><circle cx="6" cy="6" r="5.200" fill="#fdfdfd" stroke="#a9a9a9" stroke-width="0.900"/><circle cx="6" cy="6" r="2.600" fill="#2e3436"/></svg>
<div class="t" style="left:24px;top:89px">Linear</div>
<svg class="abs" style="left:70px;top:90px" width="12" height="12"><circle cx="6" cy="6" r="5.200" fill="#fdfdfd" stroke="#a9a9a9" stroke-width="0.900"/></svg>
<div class="t" style="left:87px;top:89px">Tree</div>
<div class="abs" style="left:121px;top:91px;width:11px;height:11px;background:#fdfdfd;border:1px solid #b0b0b0"></div>
<div class="t" style="left:136px;top:89px">Thread</div>
<div class="abs" style="left:188px;top:86px;width:127px;height:21px;background:#fff;border:1px solid #6aaeea;border-radius:2px;box-shadow:0 0 0 0.500px #9cc8f0"></div>
<div class="t" style="left:191px;top:89px;color:#8d8d8d">Filter</div>
<div class="abs" style="left:320px;top:87px;width:142px;height:20px;background:linear-gradient(#f8f8f8,#ebebeb);border:1px solid #c2c2c2;border-radius:3px"></div>
<div class="t" style="left:325px;top:89px">All Processes</div>
<svg class="abs" style="left:448px;top:94px" width="8" height="5"><path d="M0.500,0.500h6l-3,3.500z" fill="#3a3a3a"/></svg>
<div class="abs" style="left:549px;top:91px;width:3px;height:10px;background:#2e3436"></div><div class="abs" style="left:555px;top:91px;width:3px;height:10px;background:#2e3436"></div>
<div class="abs" style="left:4px;top:108px;width:560px;height:204px;background:#fff;overflow:hidden">
<div class="abs" style="left:0;top:0;width:560px;height:17px;background:linear-gradient(#f4f4f4,#eaeaea);border-bottom:1px solid #d0d0d0"></div>
<div class="t" style="left:2px;top:1px">PID</div>
<div class="t" style="left:44px;top:1px">TTY</div>
<div class="t" style="left:90px;top:1px">USER</div>
<div class="t" style="left:207px;top:1px">STAT</div>
<div class="t" style="left:259px;top:1px">MEM</div>
<div class="t" style="left:311px;top:1px">%CPU</div>
<div class="t" style="left:369px;top:1px">START</div>
<div class="t" style="left:430px;top:1px">TIME</div>
<div class="t" style="left:481px;top:1px">COMMAND_LINE</div>
<div class="abs" style="left:42px;top:1px;width:1px;height:15px;background:#d4d4d4"></div>
<div class="abs" style="left:87px;top:1px;width:1px;height:15px;background:#d4d4d4"></div>
<div class="abs" style="left:205px;top:1px;width:1px;height:15px;background:#d4d4d4"></div>
<div class="abs" style="left:257px;top:1px;width:1px;height:15px;background:#d4d4d4"></div>
<div class="abs" style="left:308.5px;top:1px;width:1px;height:15px;background:#d4d4d4"></div>
<div class="abs" style="left:366.5px;top:1px;width:1px;height:15px;background:#d4d4d4"></div>
<div class="abs" style="left:428px;top:1px;width:1px;height:15px;background:#d4d4d4"></div>
<div class="abs" style="left:478.5px;top:1px;width:1px;height:15px;background:#d4d4d4"></div>
<svg class="abs" style="left:355px;top:5.500px" width="8" height="5"><path d="M0.500,0.500h6l-3,3.500z" fill="#3a3a3a"/></svg>
<div class="abs" style="left:309px;top:17px;width:58px;height:187px;background:#f7f7f7;z-index:0"></div>
<div class="abs" style="left:0;top:17px;width:549px;height:187px;overflow:hidden">
<div class="abs" style="left:0;top:13.42px;width:549px;height:1px;background:#ececec"></div>
<div class="t" style="right:510px;top:0.2px">129</div><div class="t" style="left:46px;top:0.2px">-</div><div class="t" style="left:91.5px;top:0.2px">root</div><div class="t" style="left:209px;top:0.2px">IW</div><div class="t" style="right:244px;top:0.2px">0</div><div class="t" style="right:185.5px;top:0.2px">0.40</div><div class="t" style="right:125px;top:0.2px">14:03</div><div class="t" style="right:74px;top:0.2px">0.46s</div><div class="t" style="left:483px;top:0.2px">(kworker/0:1H-kblockd)</div>
<div class="abs" style="left:0;top:27.84px;width:549px;height:1px;background:#ececec"></div>
<div class="t" style="right:510px;top:14.62px">345</div><div class="t" style="left:46px;top:14.62px">-</div><div class="t" style="left:91.5px;top:14.62px">root</div><div class="t" style="left:209px;top:14.62px">IW</div><div class="t" style="right:244px;top:14.62px">0</div><div class="t" style="right:185.5px;top:14.62px">0.40</div><div class="t" style="right:125px;top:14.62px">14:03</div><div class="t" style="right:74px;top:14.62px">0.14s</div><div class="t" style="left:483px;top:14.62px">(kworker/u4:4-events_unbound)</div>
<div class="abs" style="left:0;top:42.26px;width:549px;height:1px;background:#ececec"></div>
<div class="t" style="right:510px;top:29.04px">707</div><div class="t" style="left:46px;top:29.04px">-</div><div class="t" style="left:91.5px;top:29.04px">root</div><div class="t" style="left:209px;top:29.04px">S N</div><div class="t" style="right:244px;top:29.04px">3.3M</div><div class="t" style="right:185.5px;top:29.04px">0.40</div><div class="t" style="right:125px;top:29.04px">14:03</div><div class="t" style="right:74px;top:29.04px">0.16s</div><div class="t" style="left:483px;top:29.04px">preload -s /var/lib/preload</div>
<div class="abs" style="left:0;top:56.68px;width:549px;height:1px;background:#ececec"></div>
<div class="t" style="right:510px;top:43.46px">781</div><div class="t" style="left:46px;top:43.46px">1</div><div class="t" style="left:91.5px;top:43.46px">root</div><div class="t" style="left:209px;top:43.46px">S</div><div class="t" style="right:244px;top:43.46px">49.2M</div><div class="t" style="right:185.5px;top:43.46px">0.40</div><div class="t" style="right:125px;top:43.46px">14:03</div><div class="t" style="right:74px;top:43.46px">20s</div><div class="t" style="left:483px;top:43.46px">Xorg -nolisten tcp</div>
<div class="abs" style="left:0;top:71.1px;width:549px;height:1px;background:#ececec"></div>
<div class="t" style="right:510px;top:57.88px">1</div><div class="t" style="left:46px;top:57.88px">-</div><div class="t" style="left:91.5px;top:57.88px">root</div><div class="t" style="left:209px;top:57.88px">S</div><div class="t" style="right:244px;top:57.88px">3.6M</div><div class="t" style="right:185.5px;top:57.88px">0.00</div><div class="t" style="right:125px;top:57.88px">14:03</div><div class="t" style="right:74px;top:57.88px">0.89s</div><div class="t" style="left:483px;top:57.88px">init splash</div>
<div class="abs" style="left:0;top:85.52px;width:549px;height:1px;background:#ececec"></div>
<div class="t" style="right:510px;top:72.3px">2</div><div class="t" style="left:46px;top:72.3px">-</div><div class="t" style="left:91.5px;top:72.3px">root</div><div class="t" style="left:209px;top:72.3px">SW</div><div class="t" style="right:244px;top:72.3px">0</div><div class="t" style="right:185.5px;top:72.3px">0.00</div><div class="t" style="right:125px;top:72.3px">14:03</div><div class="t" style="right:74px;top:72.3px">0.01s</div><div class="t" style="left:483px;top:72.3px">(kthreadd)</div>
<div class="abs" style="left:0;top:99.94px;width:549px;height:1px;background:#ececec"></div>
<div class="t" style="right:510px;top:86.72px">3</div><div class="t" style="left:46px;top:86.72px">-</div><div class="t" style="left:91.5px;top:86.72px">root</div><div class="t" style="left:209px;top:86.72px">IW<</div><div class="t" style="right:244px;top:86.72px">0</div><div class="t" style="right:185.5px;top:86.72px">0.00</div><div class="t" style="right:125px;top:86.72px">14:03</div><div class="t" style="right:74px;top:86.72px">0.00s</div><div class="t" style="left:483px;top:86.72px">(rcu_gp)</div>
<div class="abs" style="left:0;top:114.36px;width:549px;height:1px;background:#ececec"></div>
<div class="t" style="right:510px;top:101.14px">4</div><div class="t" style="left:46px;top:101.14px">-</div><div class="t" style="left:91.5px;top:101.14px">root</div><div class="t" style="left:209px;top:101.14px">IW<</div><div class="t" style="right:244px;top:101.14px">0</div><div class="t" style="right:185.5px;top:101.14px">0.00</div><div class="t" style="right:125px;top:101.14px">14:03</div><div class="t" style="right:74px;top:101.14px">0.00s</div><div class="t" style="left:483px;top:101.14px">(rcu_par_gp)</div>
<div class="abs" style="left:0;top:128.78px;width:549px;height:1px;background:#ececec"></div>
<div class="t" style="right:510px;top:115.56px">5</div><div class="t" style="left:46px;top:115.56px">-</div><div class="t" style="left:91.5px;top:115.56px">root</div><div class="t" style="left:209px;top:115.56px">IW<</div><div class="t" style="right:244px;top:115.56px">0</div><div class="t" style="right:185.5px;top:115.56px">0.00</div><div class="t" style="right:125px;top:115.56px">14:03</div><div class="t" style="right:74px;top:115.56px">0.00s</div><div class="t" style="left:483px;top:115.56px">(slub_flushwq)</div>
<div class="abs" style="left:0;top:143.2px;width:549px;height:1px;background:#ececec"></div>
<div class="t" style="right:510px;top:129.98px">6</div><div class="t" style="left:46px;top:129.98px">-</div><div class="t" style="left:91.5px;top:129.98px">root</div><div class="t" style="left:209px;top:129.98px">IW<</div><div class="t" style="right:244px;top:129.98px">0</div><div class="t" style="right:185.5px;top:129.98px">0.00</div><div class="t" style="right:125px;top:129.98px">14:03</div><div class="t" style="right:74px;top:129.98px">0.00s</div><div class="t" style="left:483px;top:129.98px">(netns)</div>
<div class="abs" style="left:0;top:157.62px;width:549px;height:1px;background:#ececec"></div>
<div class="t" style="right:510px;top:144.4px">7</div><div class="t" style="left:46px;top:144.4px">-</div><div class="t" style="left:91.5px;top:144.4px">root</div><div class="t" style="left:209px;top:144.4px">IW</div><div class="t" style="right:244px;top:144.4px">0</div><div class="t" style="right:185.5px;top:144.4px">0.00</div><div class="t" style="right:125px;top:144.4px">14:03</div><div class="t" style="right:74px;top:144.4px">0.00s</div><div class="t" style="left:483px;top:144.4px">(kworker/0:0-events)</div>
<div class="abs" style="left:0;top:172.04px;width:549px;height:1px;background:#ececec"></div>
<div class="t" style="right:510px;top:158.82px">8</div><div class="t" style="left:46px;top:158.82px">-</div><div class="t" style="left:91.5px;top:158.82px">root</div><div class="t" style="left:209px;top:158.82px">IW<</div><div class="t" style="right:244px;top:158.82px">0</div><div class="t" style="right:185.5px;top:158.82px">0.00</div><div class="t" style="right:125px;top:158.82px">14:03</div><div class="t" style="right:74px;top:158.82px">0.00s</div><div class="t" style="left:483px;top:158.82px">(kworker/0:0H-events_highpri)</div>
<div class="abs" style="left:0;top:186.46px;width:549px;height:1px;background:#ececec"></div>
<div class="t" style="right:510px;top:173.24px">9</div><div class="t" style="left:46px;top:173.24px">-</div><div class="t" style="left:91.5px;top:173.24px">root</div><div class="t" style="left:209px;top:173.24px">IW</div><div class="t" style="right:244px;top:173.24px">0</div><div class="t" style="right:185.5px;top:173.24px">0.00</div><div class="t" style="right:125px;top:173.24px">14:03</div><div class="t" style="right:74px;top:173.24px">0.05s</div><div class="t" style="left:483px;top:173.24px">(kworker/u4:0-events_unbound)</div>
</div>
</div>
<div class="abs" style="left:553px;top:125px;width:11px;height:187px;background:#f4f4f4"></div>
<div class="abs" style="left:554px;top:135px;width:10px;height:166px;background:#dedede;border-left:1px solid #d2d2d2"></div>
<div class="abs" style="left:554px;top:134px;width:10px;height:23px;background:linear-gradient(90deg,#fbfbfb,#f0f0f0);border:1px solid #cdcdcd"></div>
<svg class="abs" style="left:554px;top:127px" width="10" height="184"><path d="M2,6l3,-3.500l3,3.500z M2,177.500l3,3.500l3,-3.500z" fill="#3a3a3a"/><path d="M0,7.500h10" stroke="#bbb" stroke-width="0.800"/></svg>
<div class="abs" style="left:4px;top:312px;width:549px;height:12px;background:#e6e6e6"></div>
<div class="abs" style="left:14px;top:313px;width:210px;height:11px;background:linear-gradient(#fbfbfb,#eeeeee);border:1px solid #d4d4d4"></div>
<div class="abs" style="left:4px;top:312px;width:10px;height:12px;background:#f4f4f4"></div><div class="abs" style="left:542px;top:312px;width:11px;height:12px;background:#f4f4f4"></div>
<svg class="abs" style="left:4px;top:312px" width="549" height="12"><path d="M6.500,3l-3.500,3l3.500,3z M541.500,3l3.500,3l-3.500,3z" fill="#3a3a3a"/></svg>
<div class="t" style="left:6px;top:327px">Process count: 189</div>
<svg class="abs" style="left:554px;top:334px" width="10" height="10"><path d="M8,1v1M5,4h1M8,4v1M2,7h1M5,7h1M8,7h1" stroke="#bdbdbd" stroke-width="1.200"/></svg>
</div>
<!--/QPS-->
<!--PANEL-->
<div class="abs" id="panel" style="left:0;top:742px;width:1024px;height:26px;background:linear-gradient(rgba(76,75,67,.55) 0,rgba(76,75,67,.55) 1px,#4b4a42 1px,#47463f 20%,#3e3d3a 75%,#3c3b39 100%);color:#e6e6e6">
 
 <!-- menu logo -->
 <svg class="abs" style="left:3px;top:4px" width="18" height="18" viewBox="0 0 18 18"><circle cx="9" cy="9.100" r="9" fill="#e5511f"/><g fill="none" stroke="#fff5ec" stroke-linecap="round" stroke-linejoin="round"><path d="M3.100,4.300q0.200,4 2.100,6.300" stroke-width="1.700"/><path d="M7.500,5.900q0.800,-1.800 2.100,-2.500l4,1.100" stroke-width="1.200"/><path d="M10.700,7.300q2,2.600 0.500,4.500q-1.300,1.500 -3.900,1.800" stroke-width="1.500"/></g></svg>
 <!-- show desktop -->
 <svg class="abs" style="left:29px;top:6px" width="16" height="15" viewBox="0 0 16 15"><rect x="0" y="0" width="16" height="14.500" rx="0.800" fill="#4a90e0"/><rect x="0" y="0" width="16" height="1.600" fill="#1f3a5c"/><rect x="4.300" y="13" width="7.500" height="1.500" fill="#1f3a5c"/></svg>
 <!-- workspaces -->
 <div class="abs" style="left:51px;top:2px;width:20px;height:22px;background:#2d2d2c;border-radius:3px"></div>
 <div class="t" style="left:51px;top:5px;width:20px;text-align:center;font-size:13px;line-height:15px;color:#f0f0f0">1</div>
 <div class="t" style="left:74px;top:5px;width:20px;text-align:center;font-size:13px;line-height:15px;color:#f0f0f0">2</div>
 <!-- drawer (file manager) -->
 <svg class="abs" style="left:100px;top:5px" width="16" height="16" viewBox="0 0 16 16"><rect x="1.500" y="0" width="13" height="2" fill="#4a90d9"/><rect x="1" y="1.800" width="14" height="3" fill="#e6b52e"/><rect x="0" y="4.500" width="16" height="11.500" rx="0.600" fill="#8f8f8f"/><rect x="0" y="14.500" width="16" height="1.500" fill="#7d7d7d"/><rect x="5.500" y="9" width="5" height="1.600" fill="#f2f2f2"/></svg>
 <!-- terminal -->
 <svg class="abs" style="left:125px;top:6px" width="16" height="14" viewBox="0 0 16 14"><rect x="0" y="0" width="16" height="14" rx="0.800" fill="#3b3b3a"/><path d="M2.200,2.700l3,2.300l-3,2.300" stroke="#fff" stroke-width="1.400" fill="none"/><path d="M6,8.300h4.500" stroke="#fff" stroke-width="1.500"/></svg>
 <!-- featherpad -->
 <svg class="abs" style="left:149px;top:5px" width="17" height="16" viewBox="0 0 17 16"><rect x="0.500" y="0" width="16" height="16" fill="#e6e6e6"/><rect x="0.500" y="13.300" width="16" height="2.700" fill="#bcbcbc"/><path d="M13.500,1.500q-6,-0.500 -8.500,4q-1.500,3 -1,5.500q5,-0.500 7,-4q1.500,-2.500 2.500,-5.500z" fill="#2a6fc9"/><path d="M12,3q-5,3 -8.500,9.500" stroke="#8fb8ea" stroke-width="0.700" fill="none"/><path d="M4,11l-1.500,2" stroke="#555" stroke-width="0.800"/></svg>
 <!-- task buttons -->
 <div class="abs" style="left:172px;top:2px;width:157px;height:21.500px;border:1.500px solid #2f2f2c;border-radius:4px"></div>
 <svg class="abs" style="left:176px;top:5px" width="16" height="16" viewBox="0 0 17 16"><path d="M0.500,1.300a0.800,0.800 0 0 1 0.800,-0.800h4.700l1.500,1.700h8.200a0.800,0.800 0 0 1 0.800,0.800v12h-16z" fill="#4678b4"/><rect x="1.300" y="3.300" width="14.400" height="1.300" fill="#e6ecf4"/><rect x="0.500" y="4.700" width="16" height="10.800" rx="0.800" fill="#5294e2"/></svg>
 <div class="t" style="left:194px;top:6px">joshua</div>
 <div class="abs" style="left:332.500px;top:2px;width:156.500px;height:21.500px;border:1.500px solid #2f2f2c;border-radius:4px"></div>
 <svg class="abs" style="left:336px;top:6px" width="16" height="14" viewBox="0 0 16 14"><rect x="0" y="0" width="16" height="14" rx="0.800" fill="#515150"/><path d="M2.200,2.700l3,2.300l-3,2.300" stroke="#fff" stroke-width="1.400" fill="none"/><path d="M6,8.300h4.500" stroke="#fff" stroke-width="1.500"/></svg>
 <div class="t" style="left:354px;top:6px">joshua@ubuntu-linu...</div>
 <div class="abs" style="left:492px;top:2px;width:157px;height:21.500px;background:#3a3a38;border:1px solid #333331;border-radius:4px"></div>
 <div class="abs" style="left:495px;top:4px;width:18px;height:18px;background:#000"></div><div class="abs" style="left:496px;top:19px;width:3px;height:3px;background:#2a9c78"></div>
 <div class="t" style="left:514.500px;top:6px">joshua@ubuntu-linux</div>
 <!-- tray -->
 <div class="t" style="left:694px;top:6px">C</div>
 <div class="t" style="left:708px;top:6px">N</div>
 <div class="t" style="left:722px;top:6px">S</div>
 <div class="abs" style="left:732px;top:4px;width:29px;height:17.500px;border:1.500px solid #2f2f2c;border-radius:4px"></div>
 <div class="t" style="left:738px;top:6px">US</div>
 <div class="t" style="left:765px;top:6px;font-family:'DejaVu Sans Condensed','DejaVu Sans',sans-serif;font-weight:bold;font-size:10.500px;-webkit-text-stroke:0;color:#4a90e2">EN</div>
 <!--TRAY-->
 <div class="abs" style="left:782px;top:1px;width:21px;height:25px;border:1.500px solid #2f2f2c;border-bottom:none;border-radius:4px 4px 0 0"></div>
 <div class="abs" style="left:804px;top:1px;width:21px;height:25px;border:1.500px solid #2f2f2c;border-bottom:none;border-radius:4px 4px 0 0"></div>
 <div class="abs" style="left:825px;top:1px;width:21px;height:25px;border:1.500px solid #2f2f2c;border-bottom:none;border-radius:4px 4px 0 0"></div>
 <div class="abs" style="left:847px;top:1px;width:21px;height:25px;border:1.500px solid #2f2f2c;border-bottom:none;border-radius:4px 4px 0 0"></div>
 <div class="abs" style="left:868px;top:1px;width:21px;height:25px;border:1.500px solid #2f2f2c;border-bottom:none;border-radius:4px 4px 0 0"></div>
 <div class="abs" style="left:890px;top:1px;width:21px;height:25px;border:1.500px solid #2f2f2c;border-bottom:none;border-radius:4px 4px 0 0"></div>
 <svg class="abs" style="left:785px;top:7px" width="14" height="12" viewBox="0 0 14 12"><path d="M1.800,1.500h10.400v7.800h-2.200v1.400h-6v-1.400h-2.200z" fill="none" stroke="#f0f0f0" stroke-width="1.500"/><path d="M4,2.500v1.300M6,2.500v1.300M8,2.500v1.300M10,2.500v1.300" stroke="#f0f0f0" stroke-width="0.800"/></svg>
 <svg class="abs" style="left:806px;top:5px" width="18" height="18" viewBox="0 0 18 18"><circle cx="7.500" cy="8" r="5.600" fill="none" stroke="#d6d6d6" stroke-width="1.800"/><path d="M4.800,7.200a3,3 0 0 1 5.200,-1.200l0.800,-0.800v2.800h-2.800l0.900,-0.900a1.800,1.800 0 0 0 -2.900,0.500z M10.200,8.800a3,3 0 0 1 -5.200,1.200l-0.800,0.800v-2.800h2.800l-0.900,0.900a1.800,1.800 0 0 0 2.900,-0.500z" fill="#d6d6d6"/><circle cx="14.500" cy="14" r="1.700" fill="#3d8ee8"/></svg>
 <svg class="abs" style="left:827px;top:5px" width="17" height="17" viewBox="0 0 17 17"><circle cx="8.500" cy="8.500" r="8.200" fill="#e2522b"/><path d="M5,6.500a4.200,4.200 0 1 1 -0.500,3.500" fill="none" stroke="#fff" stroke-width="1.600"/><path d="M3,5.500l3.800,-0.300l-1,3.300z" fill="#fff"/></svg>
 <svg class="abs" style="left:849px;top:4px" width="17" height="18" viewBox="0 0 17 18"><rect x="0.500" y="2" width="13" height="15" rx="1" fill="#f0b232"/><rect x="4.500" y="0.300" width="5" height="3" rx="0.800" fill="#bdbdbd"/><rect x="1.800" y="3.500" width="10.400" height="12.300" fill="#f4f4f4"/><path d="M6,6.500l8,-1.500l2.300,9l-3.300,3l-5,0.500z" fill="#ffffff" stroke="#d8d8d8" stroke-width="0.400"/></svg>
 <svg class="abs" style="left:870px;top:5px" width="18" height="16" viewBox="0 0 18 16"><rect x="1.500" y="2.500" width="15" height="11.500" rx="1" fill="#50504e"/><circle cx="5.200" cy="5.500" r="4.800" fill="#3d9bf0"/><path d="M5.200,2.500v3.800" stroke="#fff" stroke-width="1.300"/><circle cx="5.200" cy="8" r="0.750" fill="#fff"/></svg>
 <div class="abs" style="left:891px;top:4px;width:18px;height:18px;background:#000"></div><div class="abs" style="left:892px;top:19px;width:3px;height:3px;background:#2a9c78"></div>
 <svg class="abs" style="left:916px;top:5px" width="14" height="16" viewBox="0 0 14 16"><rect x="0.600" y="0.200" width="13" height="15.400" fill="#9b9b9b"/><path d="M7,4l3,3.300h-6z M4,8.600h6v1.300h-6z" fill="#666"/></svg>
 <svg class="abs" style="left:940px;top:6px" width="15" height="14" viewBox="0 0 15 14"><path d="M0.800,4.500h2.700l4,-3.800v12.600l-4,-3.800h-2.700z" fill="#f0f0f0"/><path d="M9.300,3.800a4,4 0 0 1 0,6.400z" fill="#f0f0f0"/><path d="M10.800,1.500a6.500,6.500 0 0 1 0,11" fill="none" stroke="#9a9a9a" stroke-width="1.200"/></svg>

<!--/TRAY-->
 <div class="t" style="left:963px;top:6px;font-size:12px;color:#f2f2f2">14:07</div>
 <svg class="abs" style="left:1003px;top:5px" width="17" height="17" viewBox="0 0 17 17"><circle cx="8.500" cy="8.500" r="8.200" fill="#e2452d"/><path d="M5.800,5.200a4.300,4.300 0 1 0 5.400,0" fill="none" stroke="#fff" stroke-width="1.500" stroke-linecap="round"/><path d="M8.500,3.300v5" stroke="#fff" stroke-width="1.500" stroke-linecap="round"/></svg>
</div>

<!--/PANEL-->
</div>
</body>
</html>
